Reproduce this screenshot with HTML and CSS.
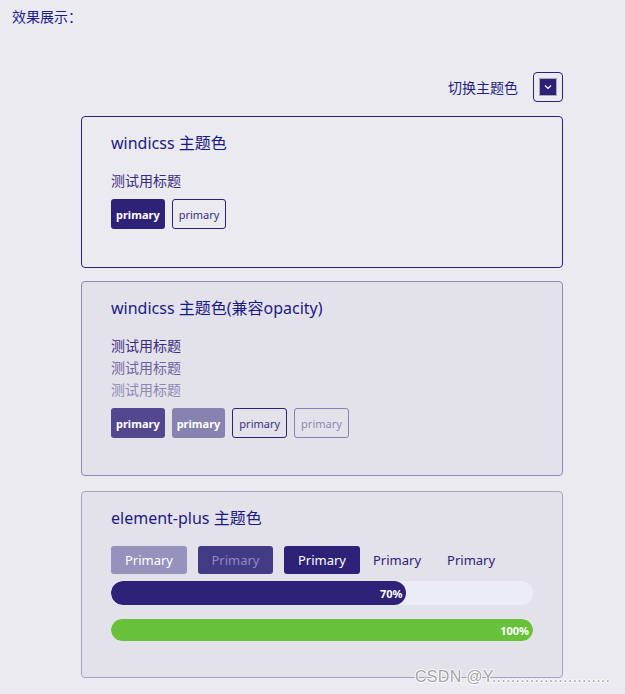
FILE: index.html
```html
<!DOCTYPE html>
<html lang="zh-CN">
  <head>
    <meta charset="UTF-8" />
    <meta name="viewport" content="width=device-width, initial-scale=1.0" />
    <title>主题色效果展示</title>
    <link rel="stylesheet" href="styles.css">
  </head>
  <body>
    <p class="intro">效果展示：</p>

    <div class="demo">
      <div class="switcher">
        <span class="switcher-label">切换主题色</span>
        <button class="color-picker" type="button">
          <span class="swatch">
            <svg width="8" height="6" viewBox="0 0 8 6">
              <path d="M1 1.5 L4 4.5 L7 1.5" fill="none" stroke="#fff" stroke-width="1.2" />
            </svg>
          </span>
        </button>
      </div>

      <div class="card">
        <h3 class="card-title">windicss 主题色</h3>
        <p class="heading">测试用标题</p>
        <div class="btn-row">
          <button class="wbtn wbtn-fill">primary</button>
          <button class="wbtn wbtn-outline">primary</button>
        </div>
      </div>

      <div class="card card-soft">
        <h3 class="card-title">windicss 主题色(兼容opacity)</h3>
        <p class="heading">测试用标题</p>
        <p class="heading heading-70">测试用标题</p>
        <p class="heading heading-50">测试用标题</p>
        <div class="btn-row">
          <button class="wbtn wbtn-fill wbtn-80">primary</button>
          <button class="wbtn wbtn-fill wbtn-50">primary</button>
          <button class="wbtn wbtn-outline">primary</button>
          <button class="wbtn wbtn-outline wbtn-outline-50">primary</button>
        </div>
      </div>

      <div class="card card-soft card-el">
        <h3 class="card-title">element-plus 主题色</h3>
        <div class="el-row">
          <button class="el-btn el-btn-light">Primary</button>
          <button class="el-btn el-btn-dim">Primary</button>
          <button class="el-btn el-btn-primary">Primary</button>
          <button class="el-btn el-btn-text">Primary</button>
          <button class="el-btn el-btn-text">Primary</button>
        </div>
        <div class="progress">
          <div class="progress-bar" style="width: 70%">70%</div>
        </div>
        <div class="progress progress-thin">
          <div class="progress-bar progress-success" style="width: 100%">100%</div>
        </div>
      </div>
    </div>

    <div class="watermark">CSDN @Y.........................</div>
  </body>
</html>
```

FILE: styles.css
```css
body {
  margin: 0;
  padding: 10px 12px;
  background-color: #ebeaf0;
  font-family: "Noto Sans", "Noto Sans CJK SC", sans-serif;
  color: #1f1f86;
  min-height: 674px;
  position: relative;
}
.intro {
  margin: 0;
  font-size: 14px;
  line-height: 14px;
  color: #1c1c8c;
}
.demo {
  width: 482px;
  margin: 48px 0 0 69px;
}
.switcher {
  display: flex;
  justify-content: flex-end;
  align-items: center;
  gap: 15px;
  margin-bottom: 14px;
}
.switcher-label {
  font-size: 14px;
  color: #1f1f86;
}
.color-picker {
  width: 30px;
  height: 30px;
  padding: 0;
  border: 1px solid #2e2178;
  border-radius: 4px;
  background: transparent;
  display: flex;
  align-items: center;
  justify-content: center;
  cursor: pointer;
}
.swatch {
  width: 18px;
  height: 18px;
  box-sizing: border-box;
  border: 1px solid #a9a7b6;
  background-color: #2e2178;
  display: flex;
  align-items: center;
  justify-content: center;
}
.card {
  border: 1px solid #2e2178;
  border-radius: 4px;
  padding: 14px 29px 38px;
  margin-bottom: 13px;
}
.card-soft {
  background-color: #e3e2eb;
  border-color: #8f8ab8;
  padding-bottom: 37px;
  margin-bottom: 15px;
}
.card-el {
  border-color: #a6a2c8;
  padding-bottom: 36px;
}
.card-title {
  margin: 0 0 15px;
  font-size: 16px;
  font-weight: normal;
  line-height: 24px;
  color: #1b1a84;
}
.card-el .card-title {
  margin-bottom: 16px;
}
.heading {
  margin: 0;
  font-size: 14px;
  line-height: 22px;
  color: #3a2a7e;
}
.heading-70 {
  opacity: 0.7;
}
.heading-50 {
  opacity: 0.5;
}
.btn-row {
  display: flex;
  gap: 7px;
  margin-top: 7px;
}
.wbtn {
  height: 30px;
  padding: 0 6px;
  border-radius: 3px;
  font-family: "Noto Sans", sans-serif;
  font-size: 11px;
  cursor: pointer;
}
.wbtn-fill {
  background-color: #2e2178;
  border: none;
  color: #fff;
  font-weight: bold;
  padding: 0 5px;
}
.wbtn-80 {
  background-color: rgba(46, 33, 120, 0.8);
}
.wbtn-50 {
  background-color: rgba(46, 33, 120, 0.5);
}
.wbtn-outline {
  background: transparent;
  border: 1px solid #2e2178;
  color: #3a2f7e;
}
.wbtn-outline-50 {
  border-color: rgba(46, 33, 120, 0.5);
  color: rgba(46, 33, 120, 0.5);
}
.el-row {
  display: flex;
  margin-bottom: 7px;
}
.el-btn {
  height: 28px;
  width: 76px;
  padding: 0;
  border: none;
  border-radius: 3px;
  font-family: "Noto Sans", sans-serif;
  font-size: 13px;
  color: #fff;
  cursor: pointer;
}
.el-btn + .el-btn {
  margin-left: 11px;
}
.el-btn-light {
  background-color: #9691bd;
}
.el-btn-dim {
  background-color: #433a86;
  color: #8f89c0;
  width: 75px;
}
.el-btn-primary {
  background-color: #2e2178;
}
.el-btn.el-btn-text {
  background: transparent;
  color: #2e2178;
  width: auto;
  padding: 0 13px;
  margin-left: 0;
}
.progress {
  height: 24px;
  border-radius: 12px;
  background-color: #ebecf5;
  overflow: hidden;
  margin-bottom: 14px;
}
.progress-thin {
  height: 22px;
  margin-bottom: 0;
}
.progress-bar {
  height: 100%;
  box-sizing: border-box;
  border-radius: 12px;
  background-color: #2e2178;
  color: #fff;
  font-size: 11px;
  font-weight: bold;
  display: flex;
  align-items: center;
  justify-content: flex-end;
  padding-right: 4px;
}
.progress-success {
  background-color: #67c23a;
}
.watermark {
  position: absolute;
  left: 415px;
  top: 668px;
  font-family: "Liberation Sans", Arial, sans-serif;
  font-size: 16px;
  color: #a3a3a8;
  text-shadow: 1px 0 #fff, -1px 0 #fff, 0 1px #fff, 0 -1px #fff;
  letter-spacing: 0.3px;
}
```
